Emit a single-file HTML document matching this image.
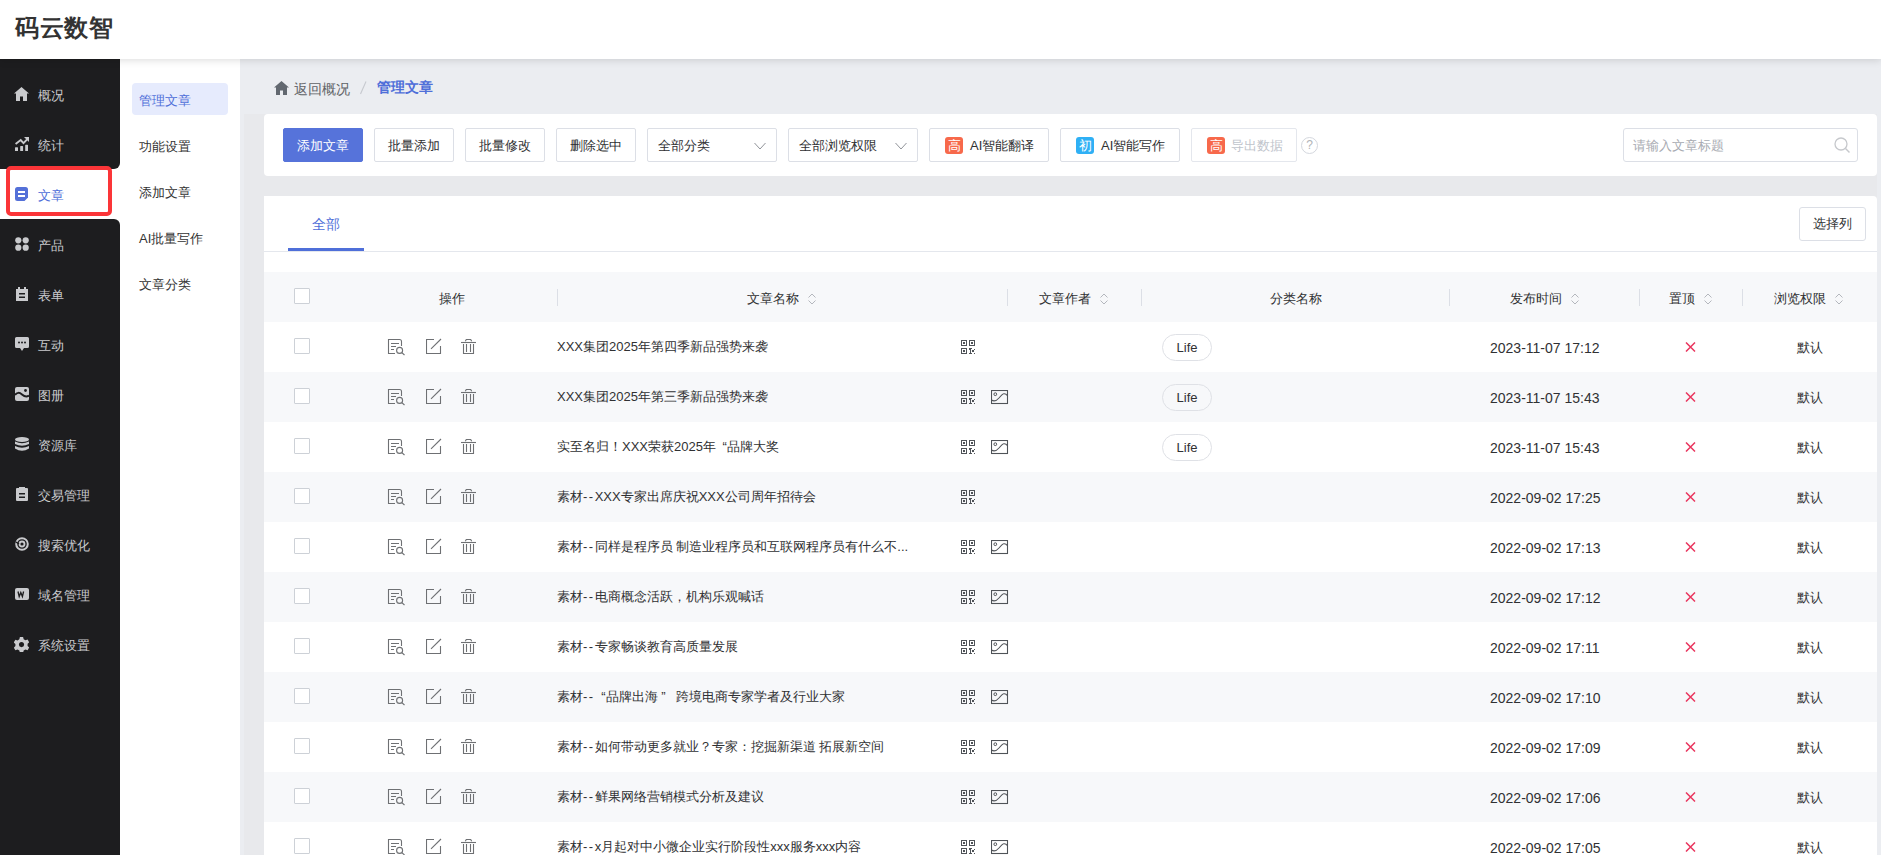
<!DOCTYPE html>
<html><head><meta charset="utf-8">
<style>
*{box-sizing:border-box;margin:0;padding:0}
html,body{width:1881px;height:855px;overflow:hidden;background:#fff}
body{position:relative;font-family:"Liberation Sans",sans-serif;color:#303133;font-size:13px}
.abs{position:absolute}
#hdr{left:0;top:0;width:1881px;height:59px;background:#fff;z-index:5;box-shadow:0 1px 8px rgba(0,0,0,.15)}
#hdr .t{left:15px;top:12px;font-size:24px;font-weight:bold;color:#333;letter-spacing:0.6px;line-height:32px;white-space:nowrap}
#side{left:0;top:59px;width:120px;height:796px;background:#fff}
.dk1{left:0;top:0;width:120px;height:110px;background:#1d1d1f;border-bottom-right-radius:6px}
.dk2{left:0;top:160px;width:120px;height:636px;background:#1d1d1f;border-top-right-radius:6px}
.si{left:0;width:120px;height:50px}
.si svg{position:absolute;left:15px;top:18px}.si svg.hm{left:14px}
.si span{position:absolute;left:38px;top:18.5px;font-size:13px;line-height:16px;color:#c9cacd;white-space:nowrap}
#sub{left:120px;top:59px;width:120px;height:796px;background:#fff}
.sm{left:12px;width:96px;height:32px;border-radius:4px}
.sm span{position:absolute;left:7px;top:10px;font-size:13px;line-height:16px;color:#333;white-space:nowrap}
#main{left:240px;top:59px;width:1641px;height:796px;background:#ebedf1}

#inner{left:244px;top:114px;width:1633px;height:741px;background:#e8e9ec}
#sbar{left:1877px;top:59px;width:4px;height:796px;background:#ebedf1}
.bc-home{left:274px;top:81px}
.bc1{left:294px;top:81px;font-size:14px;line-height:16px;color:#606266;white-space:nowrap}
.bcs{left:360px;top:80px;font-size:14px;line-height:16px;color:#c0c4cc}
.bc2{left:377px;top:79px;font-size:14px;line-height:16px;color:#4f6fd9;font-weight:bold;white-space:nowrap}
#tb{left:264px;top:114px;width:1613px;height:62px;background:#fff;border-radius:4px}
.btn{top:14px;height:34px;border:1px solid #dcdfe6;border-radius:2px;background:#fff;font-size:13px;line-height:34px;color:#303133;white-space:nowrap;text-align:center}
.btn.pr{background:#5673da;border-color:#5673da;color:#fff}
.sel{text-align:left;padding-left:10px}
.sel svg{position:absolute;right:10px;top:13px}
.badge{position:absolute;top:8px;width:18px;height:17px;border-radius:3px;color:#fff;font-size:13px;line-height:17px;text-align:center}
.help{left:1037px;top:23px;width:17px;height:17px;border:1px solid #d4d7de;border-radius:50%;font-size:12px;line-height:15px;text-align:center;color:#b0b3b8}
.srch{left:1359px;top:14px;width:235px;height:34px;border:1px solid #dcdfe6;border-radius:3px;background:#fff}
.srch span{position:absolute;left:9px;top:9px;font-size:13px;line-height:16px;color:#a8abb2;white-space:nowrap}
.srch svg{position:absolute;left:210px;top:8px}
#tc{left:264px;top:196px;width:1613px;height:700px;background:#fff;border-radius:0 4px 0 0;overflow:hidden}
.tab{left:48px;top:20px;font-size:14px;line-height:16px;color:#4f6fd9}
.tabul{left:24px;top:52px;width:76px;height:3px;background:#4f6fd9}
.tabln{left:0;top:55px;width:1613px;height:1px;background:#e4e7ed}
.colbtn{left:1535px;top:11px;width:67px;height:34px;border:1px solid #dcdfe6;border-radius:3px;font-size:13px;line-height:32px;text-align:center;color:#303133}
.thead{left:0;top:76px;width:1613px;height:50px;background:#f7f8fa}
.th{top:18.5px;font-size:13px;line-height:16px;color:#303133;white-space:nowrap}
.sep{top:17px;width:1px;height:17px;background:#dcdfe6}
.srt{position:absolute;top:2px}
.row{left:0;width:1613px;height:50px}
.cb{left:30px;top:16px;width:16px;height:16px;border:1px solid #cdd1d7;background:#fff;border-radius:1px}
.ic1{left:123px;top:16px}.ic2{left:162px;top:16px}.ic3{left:196px;top:16px}
.ttl{left:293px;top:17px;font-size:13px;line-height:16px;color:#303133;white-space:nowrap}
.qr{left:697px;top:18px}.im{left:727px;top:18px}
.tag{left:898px;top:12px;width:50px;height:27px;border:1px solid #dfe1e6;border-radius:14px;font-size:13px;line-height:26px;text-align:center;color:#303133}
.dt{left:1226px;top:18px;font-size:14px;line-height:16px;color:#303133;white-space:nowrap}
.xm{left:1421px;top:20px}
.hy{font-weight:normal;letter-spacing:1.5px}.ql{font-weight:normal;display:inline-block;width:11px;text-align:right}.qr2{font-weight:normal;display:inline-block;width:11px;text-align:left}
.dfl{left:1533px;top:18px;font-size:13px;line-height:16px;color:#303133}
</style></head><body>
<div id="hdr" class="abs"><div class="t abs">码云数智</div></div>

<div id="side" class="abs">
  <div class="abs dk1"></div>
  <div class="abs dk2"></div>
  <div class="abs si" style="top:10px"><svg class="hm" width="15" height="14" viewBox="0 0 15 14"><path d="M7.5 0L0 6.5h2V14h4V9.5h3V14h4V6.5h2z" fill="#c9cacd"/></svg><span>概况</span></div>
  <div class="abs si" style="top:60px"><svg width="15" height="15" viewBox="0 0 15 15"><path d="M0 10.8q0-.6.6-.6h1.8q.6 0 .6.6V14H0zM5.2 9.5q0-.6.6-.6h1.7q.6 0 .6.6V14H5.2zM10.2 8.3q0-.6.6-.6h1.6q.6 0 .6.6V14h-2.8z" fill="#c9cacd"/><path d="M0.6 6.9L5.7 3l2.8 3.2 4.3-4.6" stroke="#c9cacd" stroke-width="1.9" fill="none"/><path d="M9 0h5v5z" fill="#c9cacd"/></svg><span>统计</span></div>
  <div class="abs si" style="top:110px"><svg width="13" height="14" viewBox="0 0 13 14"><path d="M2.5 0h8Q13 0 13 2.5V10.5L9.5 14H2.5Q0 14 0 11.5V2.5Q0 0 2.5 0z" fill="#5470d8"/><rect x="3" y="4" width="7" height="2" fill="#fff"/><rect x="3" y="8" width="7" height="2" fill="#fff"/></svg><span style="color:#4f6fd9">文章</span></div>
  <div class="abs si" style="top:160px"><svg width="14" height="14" viewBox="0 0 14 14"><circle cx="3.3" cy="3.3" r="3.1" fill="#c9cacd"/><circle cx="10.7" cy="3.3" r="3.1" fill="#c9cacd"/><circle cx="3.3" cy="10.7" r="3.1" fill="#c9cacd"/><circle cx="10.7" cy="10.7" r="3.1" fill="#c9cacd"/></svg><span>产品</span></div>
  <div class="abs si" style="top:210px"><svg width="14" height="14" viewBox="0 0 14 14"><path d="M1 2h12v12H1z" fill="#c9cacd"/><path d="M3 0h2v3H3zM9 0h2v3H9z" fill="#c9cacd"/><path d="M4 6h6v1.6H4zM4 9.5h6v1.6H4z" fill="#1d1d1f"/></svg><span>表单</span></div>
  <div class="abs si" style="top:260px"><svg width="14" height="14" viewBox="0 0 14 14"><path d="M0 1.5Q0 0 1.5 0h11Q14 0 14 1.5v8Q14 11 12.5 11H9l-2 3-2-3H1.5Q0 11 0 9.5z" fill="#c9cacd"/><circle cx="4" cy="5.5" r="1" fill="#1d1d1f"/><circle cx="7" cy="5.5" r="1" fill="#1d1d1f"/><circle cx="10" cy="5.5" r="1" fill="#1d1d1f"/></svg><span>互动</span></div>
  <div class="abs si" style="top:310px"><svg width="14" height="14" viewBox="0 0 14 14"><path d="M0 2Q0 0 2 0h10Q14 0 14 2v10Q14 14 12 14H2Q0 14 0 12z" fill="#c9cacd"/><path d="M0 8Q3 4 7 7.5T14 8.5" stroke="#1d1d1f" stroke-width="2" fill="none"/><circle cx="10.5" cy="3.5" r="1.4" fill="#1d1d1f"/></svg><span>图册</span></div>
  <div class="abs si" style="top:360px"><svg width="14" height="14" viewBox="0 0 14 14"><ellipse cx="7" cy="2.5" rx="7" ry="2.5" fill="#c9cacd"/><path d="M0 4.5Q7 8 14 4.5V7Q7 10.5 0 7z" fill="#c9cacd"/><path d="M0 9Q7 12.5 14 9v2.5Q7 16 0 11.5z" fill="#c9cacd"/></svg><span>资源库</span></div>
  <div class="abs si" style="top:410px"><svg width="14" height="14" viewBox="0 0 14 14"><path d="M1 2Q1 1 2 1h10q1 0 1 1v11q0 1-1 1H2q-1 0-1-1z" fill="#c9cacd"/><path d="M4 0h6v3H4z" fill="#c9cacd"/><path d="M4 6h6v1.6H4zM4 9.5h6v1.6H4z" fill="#1d1d1f"/></svg><span>交易管理</span></div>
  <div class="abs si" style="top:460px"><svg width="14" height="14" viewBox="0 0 14 14"><circle cx="7" cy="7" r="5.8" stroke="#c9cacd" stroke-width="2" fill="none"/><circle cx="7" cy="7" r="2.5" stroke="#c9cacd" stroke-width="1.8" fill="none"/><path d="M1 5L4 7" stroke="#1d1d1f" stroke-width="1.5"/></svg><span>搜索优化</span></div>
  <div class="abs si" style="top:510px"><svg width="14" height="14" viewBox="0 0 14 14"><rect x="0" y="1" width="14" height="12" rx="2" fill="#c9cacd"/><path d="M3 4.5l1.2 5 1.6-4 1.6 4 1.2-5" stroke="#1d1d1f" stroke-width="1.3" fill="none"/></svg><span>域名管理</span></div>
  <div class="abs si" style="top:560px"><svg width="15" height="15" viewBox="0 0 16 16" style="left:14px"><path d="M6.3 0h3.4l.6 2.3 1.9 1.1 2.3-.7 1.7 2.9-1.7 1.7v2.2l1.7 1.7-1.7 2.9-2.3-.7-1.9 1.1-.6 2.3H6.3l-.6-2.3-1.9-1.1-2.3.7L-.2 11.4 1.5 9.7V7.5L-.2 5.8 1.5 2.9l2.3.7 1.9-1.1z" fill="#c9cacd"/><circle cx="8" cy="8.1" r="2.7" fill="#1d1d1f"/></svg><span>系统设置</span></div>
  <div class="abs" style="left:6px;top:107px;width:106px;height:50px;border:4px solid #fb3538;border-radius:5px"></div>
</div>

<div id="sub" class="abs">
  <div class="abs sm" style="top:24px;background:#e6ebfd"><span style="color:#4f6fd9">管理文章</span></div>
  <div class="abs sm" style="top:70px"><span>功能设置</span></div>
  <div class="abs sm" style="top:116px"><span>添加文章</span></div>
  <div class="abs sm" style="top:162px"><span>AI批量写作</span></div>
  <div class="abs sm" style="top:208px"><span>文章分类</span></div>
</div>


<div id="main" class="abs"></div>
<div id="inner" class="abs"></div>
<div id="sbar" class="abs"></div>
<svg class="abs bc-home" width="15" height="14" viewBox="0 0 15 14"><path d="M7.5 0L0 6.5h2V14h4V9.5h3V14h4V6.5h2z" fill="#626870"/></svg>
<span class="abs bc1">返回概况</span><svg class="abs" style="left:359px;top:80px" width="9" height="15" viewBox="0 0 9 15"><path d="M7 1.5L1.5 14" stroke="#c6c9cf" stroke-width="1.1"/></svg><span class="abs bc2">管理文章</span>

<div id="tb" class="abs">
 <div class="abs btn pr" style="left:19px;width:80px">添加文章</div>
 <div class="abs btn" style="left:110px;width:80px">批量添加</div>
 <div class="abs btn" style="left:201px;width:80px">批量修改</div>
 <div class="abs btn" style="left:292px;width:80px">删除选中</div>
 <div class="abs btn sel" style="left:383px;width:130px">全部分类<svg width="12" height="8" viewBox="0 0 12 8"><path d="M.5 1l5.5 6 5.5-6" stroke="#909399" stroke-width="1" fill="none"/></svg></div>
 <div class="abs btn sel" style="left:524px;width:130px">全部浏览权限<svg width="12" height="8" viewBox="0 0 12 8"><path d="M.5 1l5.5 6 5.5-6" stroke="#909399" stroke-width="1" fill="none"/></svg></div>
 <div class="abs btn" style="left:665px;width:120px"><span class="badge" style="left:15px;background:#f7694b">高</span><span style="position:absolute;left:40px">AI智能翻译</span></div>
 <div class="abs btn" style="left:796px;width:120px"><span class="badge" style="left:15px;background:#2fb0f5">初</span><span style="position:absolute;left:40px">AI智能写作</span></div>
 <div class="abs btn" style="left:927px;width:106px;border-color:#e4e7ed"><span class="badge" style="left:15px;background:#f7694b">高</span><span style="position:absolute;left:39px;color:#c0c4cc">导出数据</span></div>
 <div class="abs help">?</div>
 <div class="abs srch"><span>请输入文章标题</span><svg width="17" height="17" viewBox="0 0 17 17"><circle cx="7" cy="7" r="6" stroke="#c6c8cc" stroke-width="1.3" fill="none"/><path d="M11.5 11.5l4 4" stroke="#c6c8cc" stroke-width="1.5"/></svg></div>
</div>

<svg width="0" height="0" style="position:absolute">
 <defs>
  <g id="i-prev" fill="none" stroke="#6e7073" stroke-width="1.1"><path d="M8 15.5H1.5V1.5H12.5Q14.5 1.5 14.5 3.5V8"/><path d="M4 5.5H12M4 8.5H9M4 11.5H7"/><circle cx="12.6" cy="12.4" r="3"/><path d="M14.8 14.6L17.5 17"/></g>
  <g id="i-edit" fill="none" stroke="#6e7073" stroke-width="1.1"><path d="M8 1.5H0.5V15.5H14.5V8"/><path d="M5 10.8L15 1"/></g>
  <g id="i-del" fill="none" stroke="#6e7073" stroke-width="1.1"><path d="M1 4.5H16"/><path d="M5.3 3.3L6.3 1.5H10.7L11.7 3.3"/><path d="M3.5 6V15.5H13.5V6"/><path d="M6.5 6V14M10.5 6V14"/></g>
  <g id="i-qr" fill="#4f5358"><path d="M0 0h6v6H0zM1 1v4h4V1z"/><rect x="2" y="2" width="2" height="2"/><path d="M8 0h6v6H8zM9 1v4h4V1z"/><rect x="10" y="2" width="2" height="2"/><path d="M0 8h6v6H0zM1 9v4h4V9z"/><rect x="2" y="10" width="2" height="2"/><path d="M8 8h2v2H8zM10 8h1v1h-1zM11 10h2v2h-2zM13 9h1v1h-1zM9 10h1v3H9zM8 13h3v1H8zM13 13h1v1h-1z"/></g>
  <g id="i-img" fill="none" stroke="#4f5358" stroke-width="1.1"><rect x="0.5" y="0.5" width="16" height="13"/><circle cx="4.3" cy="4.2" r="1.4" stroke-width="1"/><path d="M0.5 10Q4 12.6 8 8T13 3.8Q15 3.6 16.5 5.8"/></g>
 </defs>
</svg>

<div id="tc" class="abs">
 <span class="abs tab">全部</span><div class="abs tabul"></div><div class="abs tabln"></div>
 <div class="abs colbtn">选择列</div>
 <div class="abs thead">
  <i class="cb abs" style="top:16px"></i>
  <span class="abs th" style="left:175px">操作</span>
  <div class="abs sep" style="left:293px"></div>
  <span class="abs th" style="left:483px">文章名称<svg class="srt" style="left:61px" width="8" height="12" viewBox="0 0 8 12"><path d="M.5 4.5L4 1l3.5 3.5M.5 7.5L4 11l3.5-3.5" stroke="#b4b7bd" fill="none"/></svg></span>
  <div class="abs sep" style="left:743px"></div>
  <span class="abs th" style="left:775px">文章作者<svg class="srt" style="left:61px" width="8" height="12" viewBox="0 0 8 12"><path d="M.5 4.5L4 1l3.5 3.5M.5 7.5L4 11l3.5-3.5" stroke="#b4b7bd" fill="none"/></svg></span>
  <div class="abs sep" style="left:877px"></div>
  <span class="abs th" style="left:1006px">分类名称</span>
  <div class="abs sep" style="left:1185px"></div>
  <span class="abs th" style="left:1246px">发布时间<svg class="srt" style="left:61px" width="8" height="12" viewBox="0 0 8 12"><path d="M.5 4.5L4 1l3.5 3.5M.5 7.5L4 11l3.5-3.5" stroke="#b4b7bd" fill="none"/></svg></span>
  <div class="abs sep" style="left:1375px"></div>
  <span class="abs th" style="left:1405px">置顶<svg class="srt" style="left:35px" width="8" height="12" viewBox="0 0 8 12"><path d="M.5 4.5L4 1l3.5 3.5M.5 7.5L4 11l3.5-3.5" stroke="#b4b7bd" fill="none"/></svg></span>
  <div class="abs sep" style="left:1478px"></div>
  <span class="abs th" style="left:1510px">浏览权限<svg class="srt" style="left:61px" width="8" height="12" viewBox="0 0 8 12"><path d="M.5 4.5L4 1l3.5 3.5M.5 7.5L4 11l3.5-3.5" stroke="#b4b7bd" fill="none"/></svg></span>
 </div>
<div class="row abs" style="top:126px;background:#fff"><i class="cb abs"></i><svg class="ic1 abs" width="19" height="18" viewBox="0 0 19 18"><use href="#i-prev"/></svg><svg class="ic2 abs" width="17" height="17" viewBox="0 0 17 17"><use href="#i-edit"/></svg><svg class="ic3 abs" width="17" height="17" viewBox="0 0 17 17"><use href="#i-del"/></svg><span class="ttl abs">XXX集团2025年第四季新品强势来袭</span><svg class="qr abs" width="15" height="15" viewBox="0 0 15 15"><use href="#i-qr"/></svg><span class="tag abs">Life</span><span class="dt abs">2023-11-07 17:12</span><svg class="xm abs" width="11" height="10" viewBox="0 0 11 10"><path d="M1 .5l9 9M10 .5l-9 9" stroke="#e9365e" stroke-width="1.5"/></svg><span class="dfl abs">默认</span></div>
<div class="row abs" style="top:176px;background:#f7f8fa"><i class="cb abs"></i><svg class="ic1 abs" width="19" height="18" viewBox="0 0 19 18"><use href="#i-prev"/></svg><svg class="ic2 abs" width="17" height="17" viewBox="0 0 17 17"><use href="#i-edit"/></svg><svg class="ic3 abs" width="17" height="17" viewBox="0 0 17 17"><use href="#i-del"/></svg><span class="ttl abs">XXX集团2025年第三季新品强势来袭</span><svg class="qr abs" width="15" height="15" viewBox="0 0 15 15"><use href="#i-qr"/></svg><svg class="im abs" width="18" height="15" viewBox="0 0 18 15"><use href="#i-img"/></svg><span class="tag abs">Life</span><span class="dt abs">2023-11-07 15:43</span><svg class="xm abs" width="11" height="10" viewBox="0 0 11 10"><path d="M1 .5l9 9M10 .5l-9 9" stroke="#e9365e" stroke-width="1.5"/></svg><span class="dfl abs">默认</span></div>
<div class="row abs" style="top:226px;background:#fff"><i class="cb abs"></i><svg class="ic1 abs" width="19" height="18" viewBox="0 0 19 18"><use href="#i-prev"/></svg><svg class="ic2 abs" width="17" height="17" viewBox="0 0 17 17"><use href="#i-edit"/></svg><svg class="ic3 abs" width="17" height="17" viewBox="0 0 17 17"><use href="#i-del"/></svg><span class="ttl abs">实至名归！XXX荣获2025年<b class="ql">“</b>品牌大奖</span><svg class="qr abs" width="15" height="15" viewBox="0 0 15 15"><use href="#i-qr"/></svg><svg class="im abs" width="18" height="15" viewBox="0 0 18 15"><use href="#i-img"/></svg><span class="tag abs">Life</span><span class="dt abs">2023-11-07 15:43</span><svg class="xm abs" width="11" height="10" viewBox="0 0 11 10"><path d="M1 .5l9 9M10 .5l-9 9" stroke="#e9365e" stroke-width="1.5"/></svg><span class="dfl abs">默认</span></div>
<div class="row abs" style="top:276px;background:#f7f8fa"><i class="cb abs"></i><svg class="ic1 abs" width="19" height="18" viewBox="0 0 19 18"><use href="#i-prev"/></svg><svg class="ic2 abs" width="17" height="17" viewBox="0 0 17 17"><use href="#i-edit"/></svg><svg class="ic3 abs" width="17" height="17" viewBox="0 0 17 17"><use href="#i-del"/></svg><span class="ttl abs">素材<b class="hy">--</b>XXX专家出席庆祝XXX公司周年招待会</span><svg class="qr abs" width="15" height="15" viewBox="0 0 15 15"><use href="#i-qr"/></svg><span class="dt abs">2022-09-02 17:25</span><svg class="xm abs" width="11" height="10" viewBox="0 0 11 10"><path d="M1 .5l9 9M10 .5l-9 9" stroke="#e9365e" stroke-width="1.5"/></svg><span class="dfl abs">默认</span></div>
<div class="row abs" style="top:326px;background:#fff"><i class="cb abs"></i><svg class="ic1 abs" width="19" height="18" viewBox="0 0 19 18"><use href="#i-prev"/></svg><svg class="ic2 abs" width="17" height="17" viewBox="0 0 17 17"><use href="#i-edit"/></svg><svg class="ic3 abs" width="17" height="17" viewBox="0 0 17 17"><use href="#i-del"/></svg><span class="ttl abs">素材<b class="hy">--</b>同样是程序员 制造业程序员和互联网程序员有什么不...</span><svg class="qr abs" width="15" height="15" viewBox="0 0 15 15"><use href="#i-qr"/></svg><svg class="im abs" width="18" height="15" viewBox="0 0 18 15"><use href="#i-img"/></svg><span class="dt abs">2022-09-02 17:13</span><svg class="xm abs" width="11" height="10" viewBox="0 0 11 10"><path d="M1 .5l9 9M10 .5l-9 9" stroke="#e9365e" stroke-width="1.5"/></svg><span class="dfl abs">默认</span></div>
<div class="row abs" style="top:376px;background:#f7f8fa"><i class="cb abs"></i><svg class="ic1 abs" width="19" height="18" viewBox="0 0 19 18"><use href="#i-prev"/></svg><svg class="ic2 abs" width="17" height="17" viewBox="0 0 17 17"><use href="#i-edit"/></svg><svg class="ic3 abs" width="17" height="17" viewBox="0 0 17 17"><use href="#i-del"/></svg><span class="ttl abs">素材<b class="hy">--</b>电商概念活跃，机构乐观喊话</span><svg class="qr abs" width="15" height="15" viewBox="0 0 15 15"><use href="#i-qr"/></svg><svg class="im abs" width="18" height="15" viewBox="0 0 18 15"><use href="#i-img"/></svg><span class="dt abs">2022-09-02 17:12</span><svg class="xm abs" width="11" height="10" viewBox="0 0 11 10"><path d="M1 .5l9 9M10 .5l-9 9" stroke="#e9365e" stroke-width="1.5"/></svg><span class="dfl abs">默认</span></div>
<div class="row abs" style="top:426px;background:#fff"><i class="cb abs"></i><svg class="ic1 abs" width="19" height="18" viewBox="0 0 19 18"><use href="#i-prev"/></svg><svg class="ic2 abs" width="17" height="17" viewBox="0 0 17 17"><use href="#i-edit"/></svg><svg class="ic3 abs" width="17" height="17" viewBox="0 0 17 17"><use href="#i-del"/></svg><span class="ttl abs">素材<b class="hy">--</b>专家畅谈教育高质量发展</span><svg class="qr abs" width="15" height="15" viewBox="0 0 15 15"><use href="#i-qr"/></svg><svg class="im abs" width="18" height="15" viewBox="0 0 18 15"><use href="#i-img"/></svg><span class="dt abs">2022-09-02 17:11</span><svg class="xm abs" width="11" height="10" viewBox="0 0 11 10"><path d="M1 .5l9 9M10 .5l-9 9" stroke="#e9365e" stroke-width="1.5"/></svg><span class="dfl abs">默认</span></div>
<div class="row abs" style="top:476px;background:#f7f8fa"><i class="cb abs"></i><svg class="ic1 abs" width="19" height="18" viewBox="0 0 19 18"><use href="#i-prev"/></svg><svg class="ic2 abs" width="17" height="17" viewBox="0 0 17 17"><use href="#i-edit"/></svg><svg class="ic3 abs" width="17" height="17" viewBox="0 0 17 17"><use href="#i-del"/></svg><span class="ttl abs">素材<b class="hy">--</b><b class="ql">“</b>品牌出海 <b class="qr2">”</b> 跨境电商专家学者及行业大家</span><svg class="qr abs" width="15" height="15" viewBox="0 0 15 15"><use href="#i-qr"/></svg><svg class="im abs" width="18" height="15" viewBox="0 0 18 15"><use href="#i-img"/></svg><span class="dt abs">2022-09-02 17:10</span><svg class="xm abs" width="11" height="10" viewBox="0 0 11 10"><path d="M1 .5l9 9M10 .5l-9 9" stroke="#e9365e" stroke-width="1.5"/></svg><span class="dfl abs">默认</span></div>
<div class="row abs" style="top:526px;background:#fff"><i class="cb abs"></i><svg class="ic1 abs" width="19" height="18" viewBox="0 0 19 18"><use href="#i-prev"/></svg><svg class="ic2 abs" width="17" height="17" viewBox="0 0 17 17"><use href="#i-edit"/></svg><svg class="ic3 abs" width="17" height="17" viewBox="0 0 17 17"><use href="#i-del"/></svg><span class="ttl abs">素材<b class="hy">--</b>如何带动更多就业？专家：挖掘新渠道 拓展新空间</span><svg class="qr abs" width="15" height="15" viewBox="0 0 15 15"><use href="#i-qr"/></svg><svg class="im abs" width="18" height="15" viewBox="0 0 18 15"><use href="#i-img"/></svg><span class="dt abs">2022-09-02 17:09</span><svg class="xm abs" width="11" height="10" viewBox="0 0 11 10"><path d="M1 .5l9 9M10 .5l-9 9" stroke="#e9365e" stroke-width="1.5"/></svg><span class="dfl abs">默认</span></div>
<div class="row abs" style="top:576px;background:#f7f8fa"><i class="cb abs"></i><svg class="ic1 abs" width="19" height="18" viewBox="0 0 19 18"><use href="#i-prev"/></svg><svg class="ic2 abs" width="17" height="17" viewBox="0 0 17 17"><use href="#i-edit"/></svg><svg class="ic3 abs" width="17" height="17" viewBox="0 0 17 17"><use href="#i-del"/></svg><span class="ttl abs">素材<b class="hy">--</b>鲜果网络营销模式分析及建议</span><svg class="qr abs" width="15" height="15" viewBox="0 0 15 15"><use href="#i-qr"/></svg><svg class="im abs" width="18" height="15" viewBox="0 0 18 15"><use href="#i-img"/></svg><span class="dt abs">2022-09-02 17:06</span><svg class="xm abs" width="11" height="10" viewBox="0 0 11 10"><path d="M1 .5l9 9M10 .5l-9 9" stroke="#e9365e" stroke-width="1.5"/></svg><span class="dfl abs">默认</span></div>
<div class="row abs" style="top:626px;background:#fff"><i class="cb abs"></i><svg class="ic1 abs" width="19" height="18" viewBox="0 0 19 18"><use href="#i-prev"/></svg><svg class="ic2 abs" width="17" height="17" viewBox="0 0 17 17"><use href="#i-edit"/></svg><svg class="ic3 abs" width="17" height="17" viewBox="0 0 17 17"><use href="#i-del"/></svg><span class="ttl abs">素材<b class="hy">--</b>x月起对中小微企业实行阶段性xxx服务xxx内容</span><svg class="qr abs" width="15" height="15" viewBox="0 0 15 15"><use href="#i-qr"/></svg><svg class="im abs" width="18" height="15" viewBox="0 0 18 15"><use href="#i-img"/></svg><span class="dt abs">2022-09-02 17:05</span><svg class="xm abs" width="11" height="10" viewBox="0 0 11 10"><path d="M1 .5l9 9M10 .5l-9 9" stroke="#e9365e" stroke-width="1.5"/></svg><span class="dfl abs">默认</span></div>
</div>

</body></html>
